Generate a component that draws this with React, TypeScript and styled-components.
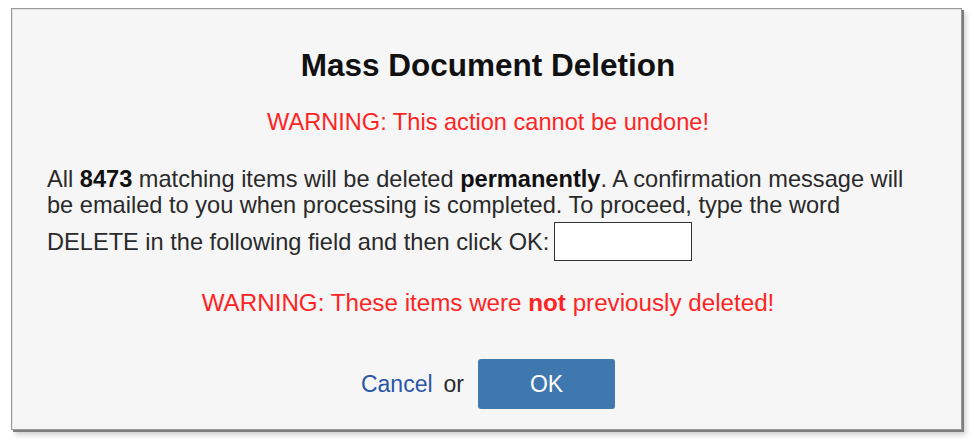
import React, { useState } from 'react';
import styled, { createGlobalStyle } from 'styled-components';

const GlobalStyle = createGlobalStyle`
  html, body {
    margin: 0;
    padding: 0;
    background: #ffffff;
  }
  body {
    font-family: "Liberation Sans", Arial, sans-serif;
  }
`;

const Page = styled.div`
  width: 974px;
  height: 445px;
  padding: 8px 0 0 11px;
  box-sizing: border-box;
`;

const Dialog = styled.div`
  width: 951px;
  height: 422px;
  box-sizing: border-box;
  background: #f6f6f6;
  border: 1px solid #9a9a9a;
  box-shadow: inset 1px 1px 0 #e2e2e2, 2px 2px 0 #7d7d7d, 4px 5px 5px rgba(0, 0, 0, 0.18);
  display: flex;
  flex-direction: column;
  align-items: center;
  padding: 38px 32px 0 35px;
  color: #2a2a2a;
`;

const Title = styled.h2`
  margin: 0;
  font-size: 31.5px;
  font-weight: 700;
  color: #111;
  line-height: 36px;
`;

const Warning = styled.p<{ $top: number; $size: number }>`
  margin: ${p => p.$top}px 0 0;
  font-size: ${p => p.$size}px;
  line-height: 28px;
  color: #ff2424;
`;

const Body = styled.div`
  align-self: stretch;
  margin-top: 30px;
  padding-right: 14px;
  font-size: 23.6px;
  line-height: 26px;
  color: #2a2a2a;

  b {
    color: #111;
  }
`;

const ConfirmInput = styled.input`
  width: 138px;
  height: 39px;
  box-sizing: border-box;
  margin: 4px 0 9px 5px;
  vertical-align: middle;
  border: 1px solid #333;
  background: #fff;
  font-size: 20px;
  outline: none;
`;

const Actions = styled.div`
  margin-top: 42px;
  display: flex;
  align-items: center;
  font-size: 23px;
`;

const CancelLink = styled.a`
  color: #2b55a8;
  text-decoration: none;
  cursor: pointer;
  margin-right: 11px;
`;

const Or = styled.span`
  color: #2a2a2a;
  margin-right: 14px;
`;

const OkButton = styled.button`
  width: 137px;
  height: 50px;
  border: none;
  border-radius: 3px;
  background: #3f78ae;
  color: #fff;
  font-family: inherit;
  font-size: 23px;
  cursor: pointer;
`;

export default function App() {
  const [value, setValue] = useState('');

  return (
    <>
      <GlobalStyle />
      <Page>
        <Dialog>
          <Title>Mass Document Deletion</Title>
          <Warning $top={25} $size={23.6}>WARNING: This action cannot be undone!</Warning>
          <Body>
            All <b>8473</b> matching items will be deleted <b>permanently</b>. A confirmation message will
            be emailed to you when processing is completed. To proceed, type the word DELETE in the
            following field and then click OK:
            <ConfirmInput value={value} onChange={e => setValue(e.target.value)} />
          </Body>
          <Warning $top={19} $size={24.2}>
            WARNING: These items were <b>not</b> previously deleted!
          </Warning>
          <Actions>
            <CancelLink>Cancel</CancelLink>
            <Or>or</Or>
            <OkButton>OK</OkButton>
          </Actions>
        </Dialog>
      </Page>
    </>
  );
}
